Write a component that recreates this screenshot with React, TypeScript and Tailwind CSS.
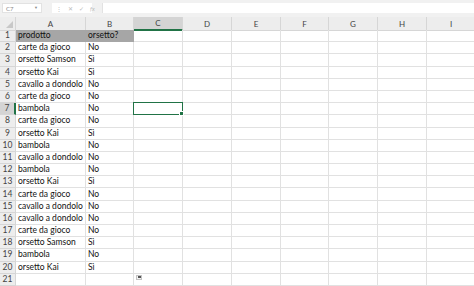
import React from "react";

const rows: [string, string][] = [
  ["prodotto", "orsetto?"],
  ["carte da gioco", "No"],
  ["orsetto Samson", "Sì"],
  ["orsetto Kai", "Sì"],
  ["cavallo a dondolo", "No"],
  ["carte da gioco", "No"],
  ["bambola", "No"],
  ["carte da gioco", "No"],
  ["orsetto Kai", "Sì"],
  ["bambola", "No"],
  ["cavallo a dondolo", "No"],
  ["bambola", "No"],
  ["orsetto Kai", "Sì"],
  ["carte da gioco", "No"],
  ["cavallo a dondolo", "No"],
  ["cavallo a dondolo", "No"],
  ["carte da gioco", "No"],
  ["orsetto Samson", "Sì"],
  ["bambola", "No"],
  ["orsetto Kai", "Sì"],
  ["", ""],
];

const cols = ["A", "B", "C", "D", "E", "F", "G", "H", "I"];
const grid = "grid grid-cols-[16px_70px_48px_49px_49px_49px_48px_49px_49px_49px]";

export default function App() {
  return (
    <div
      className="w-[474px] h-[286px] overflow-hidden bg-white text-[#111]"
      style={{ fontFamily: "Lato, 'Open Sans', sans-serif" }}
    >
      {/* formula bar */}
      <div className="h-[17px] bg-[#f1f1f1] flex items-start pt-[3px] pl-[2px] gap-[10px]">
        <div className="w-[40px] h-[10px] bg-white border border-[#e2e2e2] flex items-center justify-between px-[3px] text-[6px] text-[#888]">
          <span>C7</span>
          <span className="text-[4px]">▼</span>
        </div>
        <div className="w-[40px] h-[10px] bg-white flex items-center gap-[6px] px-[4px] text-[6px] text-[#bbb]">
          <span>⋮</span>
          <span>✕</span>
          <span>✓</span>
          <span className="italic">fx</span>
        </div>
        <div className="flex-1 h-[10px] bg-white border-l border-[#e2e2e2]" />
      </div>

      {/* column headers */}
      <div className={`${grid} h-[13px] bg-[#ededed] text-[8px] text-[#444]`}>
        <div className="relative border-r border-b border-[#d6d6d6]">
          <div className="absolute right-[2px] bottom-[2px] w-0 h-0 border-l-[7px] border-l-transparent border-b-[7px] border-b-[#c8c8c8]" />
        </div>
        {cols.map((c) => (
          <div
            key={c}
            className={`flex items-center justify-center border-r border-[#d6d6d6] ${
              c === "C" ? "bg-[#d4d4d4] border-b-2 border-b-[#217346]" : "border-b border-b-[#d6d6d6]"
            }`}
          >
            {c}
          </div>
        ))}
      </div>

      {/* rows */}
      {rows.map(([a, b], i) => {
        const n = i + 1;
        const head = n === 1;
        return (
          <div key={n} className={`${grid} h-[12.2px] text-[8.5px] leading-[11px]`}>
            <div
              className={`flex items-center justify-center text-[#444] border-b border-[#d6d6d6] ${
                n === 7 ? "bg-[#d4d4d4] border-r-2 border-r-[#217346]" : "bg-[#ededed] border-r border-r-[#d6d6d6]"
              }`}
            >
              {n}
            </div>
            <div className={`flex items-center pl-[2px] border-r border-b ${head ? "bg-[#a6a6a6] border-[#a6a6a6]" : "border-[#e1e1e1]"}`}>
              {a}
            </div>
            <div className={`flex items-center pl-[2px] border-r border-b ${head ? "bg-[#a6a6a6] border-[#a6a6a6]" : "border-[#e1e1e1]"}`}>
              {b}
            </div>
            {cols.slice(2).map((c) => (
              <div key={c} className="relative border-r border-b border-[#e1e1e1]">
                {c === "C" && n === 7 && (
                  <div className="absolute -left-px -top-px -right-px -bottom-px border-[1.5px] border-[#217346] z-10">
                    <div className="absolute -right-[2px] -bottom-[2px] w-[3px] h-[3px] bg-[#217346] border border-white box-content" />
                  </div>
                )}
                {c === "C" && n === 21 && (
                  <div className="absolute left-[2px] top-[1px] w-[6px] h-[5px] bg-[#f3f3f3] border border-[#c4c4c4] flex items-center justify-center">
                    <div className="w-[3px] h-[2px] bg-[#555]" />
                  </div>
                )}
              </div>
            ))}
          </div>
        );
      })}
    </div>
  );
}
